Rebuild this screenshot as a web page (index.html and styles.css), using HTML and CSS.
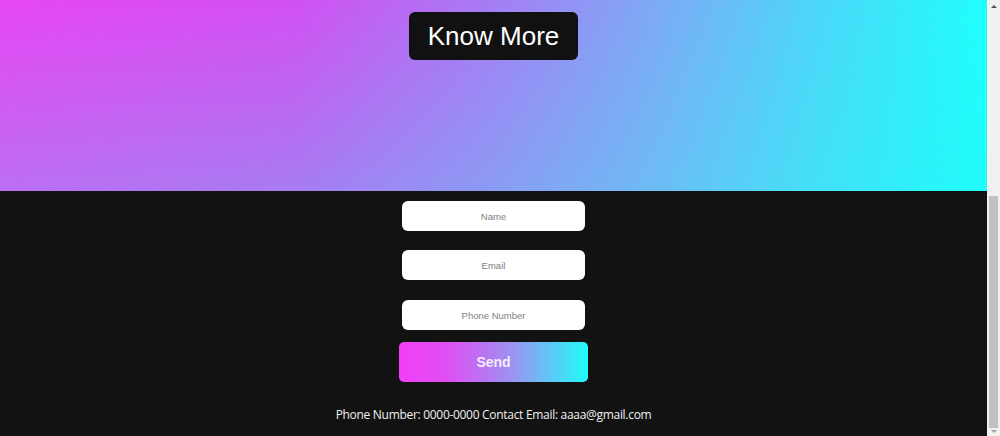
FILE: index.html
```html
<!DOCTYPE html>
<html lang="en">
<head>
    <meta charset="UTF-8">
    <meta name="viewport" content="width=device-width, initial-scale=1.0">
    <title>Know More</title>
    <link rel="stylesheet" href="styles.css">
</head>
<body>
    <div class="page">
        <main class="content">
            <section class="hero">
                <button class="know-more">Know More</button>
            </section>

            <section class="contact">
                <form class="contact-form">
                    <input type="text" placeholder="Name">
                    <input type="email" placeholder="Email">
                    <input type="tel" placeholder="Phone Number">
                    <button type="button" class="send">Send</button>
                </form>
                <p class="footer-info">Phone Number: 0000-0000 Contact Email: aaaa@gmail.com</p>
            </section>
        </main>

        <!-- fake scrollbar, the page in the shot is scrolled down -->
        <aside class="scrollbar">
            <div class="sb-arrow sb-up"></div>
            <div class="sb-gap"></div>
            <div class="sb-thumb"></div>
            <div class="sb-arrow sb-down"></div>
        </aside>
    </div>
</body>
</html>
```

FILE: styles.css
```css
* {
    box-sizing: border-box;
}

body {
    margin: 0;
    font-family: "Liberation Sans", Arial, sans-serif;
    background-color: #121212;
}

.page {
    display: flex;
    height: 436px;
    overflow: hidden;
}

.content {
    flex: 1;
    display: flex;
    flex-direction: column;
}

.hero {
    position: relative;
    height: 191px;
    display: flex;
    justify-content: center;
    align-items: flex-start;
    padding-top: 12px;
    background: linear-gradient(to right, #bd6ff3 0%, #a87cf2 30%, #8b9cf4 50%, #6ebcf5 66%, #40e4f8 84%, #20fcfb 100%);
}

/* top row of the gradient is pinker, fade it out towards the bottom */
.hero::before {
    content: "";
    position: absolute;
    inset: 0;
    background: linear-gradient(to right, #e646f2 0%, #d150f1 30%, #aa78f3 48%, #7fa8f5 66%, #4fd4f8 82%, #20fefd 100%);
    -webkit-mask-image: linear-gradient(to bottom, #000 0%, transparent 100%);
    mask-image: linear-gradient(to bottom, #000 0%, transparent 100%);
}

.know-more {
    position: relative;
    background-color: #111;
    color: #fff;
    border: none;
    border-radius: 6px;
    font-family: "Liberation Sans", Arial, sans-serif;
    font-size: 26px;
    line-height: 30px;
    padding: 9px 19px;
}

.contact {
    flex: 1;
    background-color: #121212;
    display: flex;
    flex-direction: column;
    align-items: center;
    padding-top: 10px;
}

.contact-form {
    display: flex;
    flex-direction: column;
    align-items: center;
}

.contact-form input {
    width: 183px;
    height: 30px;
    border: none;
    border-radius: 6px;
    background-color: #fff;
    text-align: center;
    font-family: "Liberation Sans", Arial, sans-serif;
    font-size: 9.5px;
    margin-bottom: 19px;
}

.contact-form input:nth-child(2) {
    margin-bottom: 20px;
}

.contact-form input:nth-child(3) {
    margin-bottom: 12px;
}

.contact-form input::placeholder {
    color: #808080;
}

.send {
    width: 189px;
    height: 40px;
    border: none;
    border-radius: 5px;
    background: linear-gradient(to right, #f03ff5 0%, #e04ef3 25%, #9b93f2 60%, #20fbfa 100%);
    color: #f4ecff;
    font-family: "Liberation Sans", Arial, sans-serif;
    font-weight: bold;
    font-size: 14px;
}

.footer-info {
    margin: 24px 0 0;
    color: #f0f0f0;
    font-family: "Open Sans", sans-serif;
    font-size: 12px;
    letter-spacing: -0.3px;
}

.scrollbar {
    width: 13px;
    background-color: #f1f1f1;
    display: flex;
    flex-direction: column;
    align-items: center;
}

.sb-arrow {
    width: 0;
    height: 0;
    border-left: 3px solid transparent;
    border-right: 3px solid transparent;
}

.sb-up {
    margin: 5px 0 9px;
    border-bottom: 3px solid #505050;
}

.sb-gap {
    height: 179px;
}

.sb-thumb {
    flex: 1;
    width: 9px;
    background-color: #c1c1c1;
}

.sb-down {
    margin: 2px 0 3px;
    border-top: 3px solid #a3a3a3;
}
```
